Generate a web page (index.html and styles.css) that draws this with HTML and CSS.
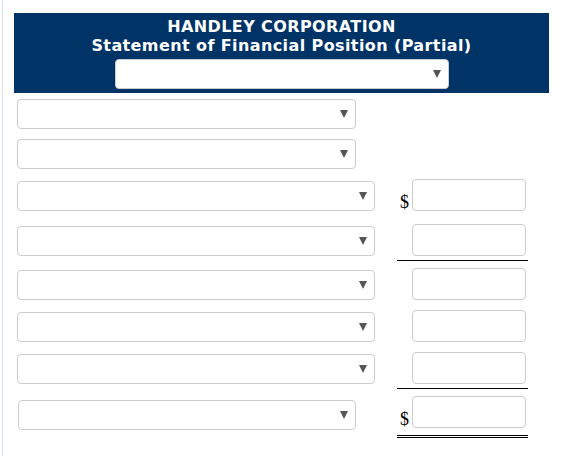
FILE: index.html
```html
<!DOCTYPE html>
<html lang="en">
<head>
  <meta charset="UTF-8">
  <title>Handley Corporation — Statement of Financial Position</title>
  <link rel="stylesheet" href="styles.css">
</head>
<body>
  <div class="page">
    <header class="sheet-head">
      <div class="title">HANDLEY CORPORATION</div>
      <div class="title">Statement of Financial Position (Partial)</div>
      <div class="pick pick-head"><select></select></div>
    </header>

    <div class="row short first">
      <div class="pick"><select></select></div>
    </div>
    <div class="row short">
      <div class="pick"><select></select></div>
    </div>

    <div class="row">
      <div class="pick"><select></select></div>
      <div class="amount"><span class="cur">$</span><input type="text"></div>
    </div>
    <div class="row after-big">
      <div class="pick"><select></select></div>
      <div class="amount line"><span class="cur"></span><input type="text"></div>
    </div>
    <div class="row after-line">
      <div class="pick"><select></select></div>
      <div class="amount"><span class="cur"></span><input type="text"></div>
    </div>
    <div class="row">
      <div class="pick"><select></select></div>
      <div class="amount"><span class="cur"></span><input type="text"></div>
    </div>
    <div class="row">
      <div class="pick"><select></select></div>
      <div class="amount line"><span class="cur"></span><input type="text"></div>
    </div>
    <div class="row after-line total">
      <div class="pick"><select></select></div>
      <div class="amount double"><span class="cur">$</span><input type="text"></div>
    </div>
  </div>
</body>
</html>
```

FILE: styles.css
```css
body {
  margin: 0;
  background: #fff;
  font-family: 'DejaVu Sans', Verdana, sans-serif;
  color: #000;
}
.page {
  margin-left: 2px;
  min-height: 456px;
  border-left: 1px solid #d6e3f0;
  padding: 13px 0 0 11px;
  box-sizing: border-box;
  width: 547px;
}
.sheet-head {
  background: #003366;
  height: 80px;
  box-sizing: border-box;
  padding-top: 4px;
  text-align: center;
  color: #fff;
}
.title {
  font-size: 16px;
  font-weight: bold;
  line-height: 19px;
  letter-spacing: 0.4px;
}
.pick {
  position: relative;
  height: 30px;
}
.pick select {
  appearance: none;
  -webkit-appearance: none;
  display: block;
  width: 100%;
  height: 30px;
  margin: 0;
  border: 1px solid #ccc;
  border-radius: 4px;
  background: #fff;
}
.pick::after {
  content: '';
  position: absolute;
  right: 8px;
  top: 11px;
  border-left: 4px solid transparent;
  border-right: 4px solid transparent;
  border-top: 8px solid #555;
  pointer-events: none;
}
.pick-head {
  width: 334px;
  margin: 4px 0 0 101px;
}

/* statement rows */
.row {
  display: flex;
  align-items: flex-start;
  padding-left: 3px;
  margin-top: 10px;
}
.row .pick {
  width: 358px;
  margin-top: 2px;
}
.row.first {
  margin-top: 6px;
}
.row.short .pick {
  width: 339px;
  margin-top: 0;
}
.row.after-big {
  margin-top: 13px;
}
.row.after-line {
  margin-top: 7px;
}
.row.total .pick {
  width: 338px;
  margin: 4px 0 0 1px;
}
.amount {
  display: flex;
  align-items: flex-end;
  margin-left: 22px;
  width: 131px;
}
.row.total .amount {
  margin-left: 41px;
}
.cur {
  width: 15px;
  font-family: 'Liberation Serif', serif;
  font-size: 18px;
  line-height: 18px;
  text-align: center;
}
.amount input {
  width: 114px;
  height: 32px;
  box-sizing: border-box;
  margin: 0;
  border: 1px solid #ccc;
  border-radius: 4px;
}
.amount.line {
  border-bottom: 1px solid #000;
  padding-bottom: 4px;
}
.amount.double {
  border-bottom: 3px double #000;
  padding-bottom: 7px;
}
```
